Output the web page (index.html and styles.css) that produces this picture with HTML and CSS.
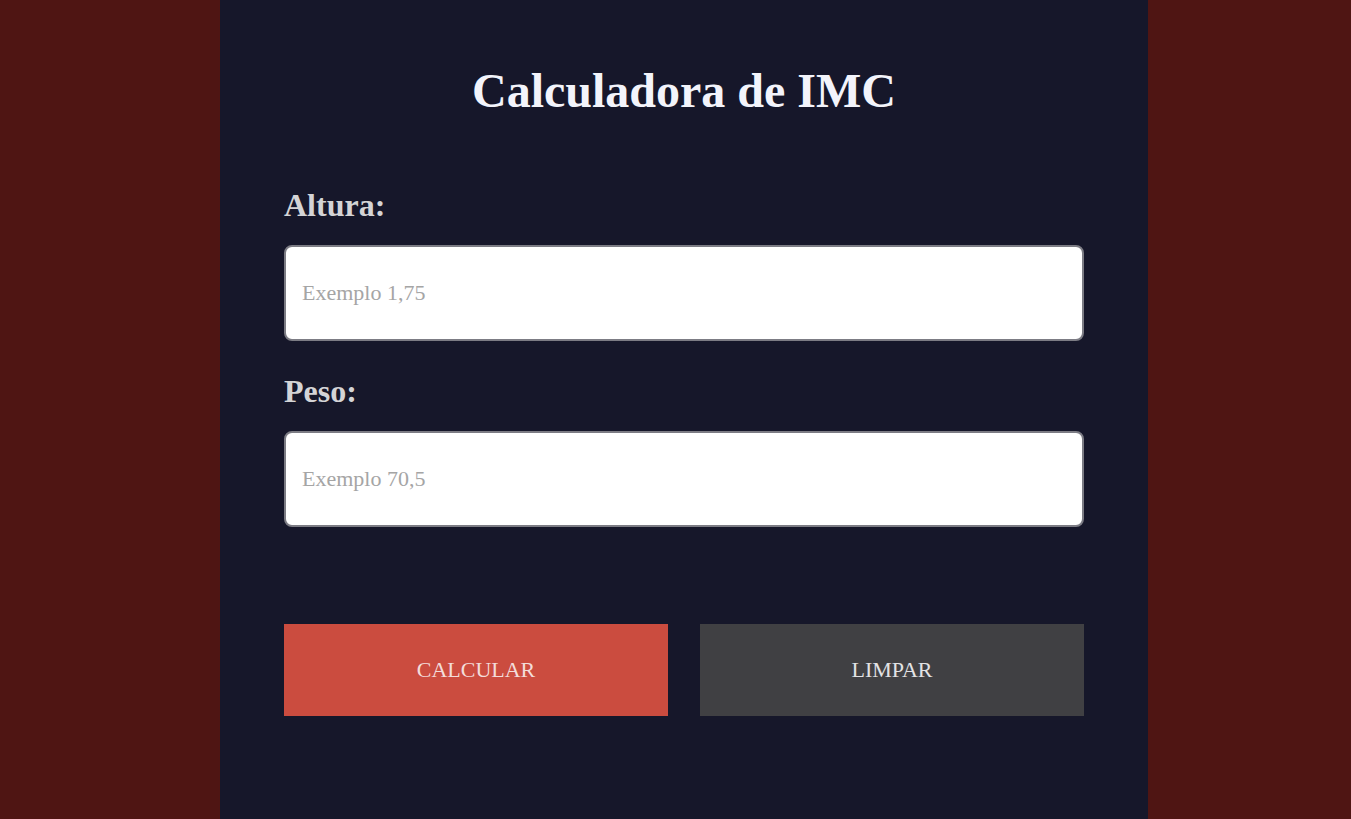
FILE: index.html
```html
<!DOCTYPE html>
<html lang="pt-BR">
<head>
    <meta charset="UTF-8">
    <meta name="viewport" content="width=device-width, initial-scale=1.0">
    <title>Calculadora de IMC</title>
    <link rel="stylesheet" href="styles.css">
</head>
<body>

    <main class="container">
        <h1>Calculadora de IMC</h1>

        <form id="imcForm" class="imc-form">
            <label for="altura">Altura:</label>
            <input type="text" id="altura" placeholder="Exemplo 1,75">

            <label for="peso">Peso:</label>
            <input type="text" id="peso" placeholder="Exemplo 70,5">

            <div class="buttons">
                <button type="submit" class="btn-calcular">CALCULAR</button>
                <button type="reset" class="btn-limpar">LIMPAR</button>
            </div>
        </form>
    </main>

</body>
</html>
```

FILE: styles.css
```css
body {
    font-family: 'Liberation Serif', 'Times New Roman', serif;
    background-color: #4f1513;
    margin: 0;
    padding: 0;
}

.container {
    width: 800px;
    min-height: 100vh;
    margin: 0 0 0 220px;
    padding: 0 64px;
    background-color: #16172a;
    box-sizing: content-box;
}

h1 {
    margin: 0;
    padding-top: 63px;
    text-align: center;
    font-size: 48px;
    line-height: 56px;
    color: #f3f4fb;
}

.imc-form {
    display: flex;
    flex-direction: column;
    padding-top: 68px;
}

.imc-form label {
    font-size: 32px;
    font-weight: bold;
    line-height: 36px;
    color: #d4d4d6;
    margin-bottom: 22px;
}

.imc-form input {
    height: 96px;
    padding: 0 16px;
    margin-bottom: 32px;
    border: 2px solid #7c7c84;
    border-radius: 8px;
    background-color: #fff;
    font-family: inherit;
    font-size: 22px;
    box-sizing: border-box;
}

.imc-form input::placeholder {
    color: #a5a5a5;
}

.buttons {
    display: flex;
    gap: 32px;
    margin-top: 65px;
}

.buttons button {
    flex: 1;
    height: 92px;
    border: none;
    font-family: inherit;
    font-size: 22px;
    cursor: pointer;
}

.btn-calcular {
    background-color: #cb4c3f;
    color: #f3dcda;
}

.btn-limpar {
    background-color: #404043;
    color: #e3e3e5;
}
```
